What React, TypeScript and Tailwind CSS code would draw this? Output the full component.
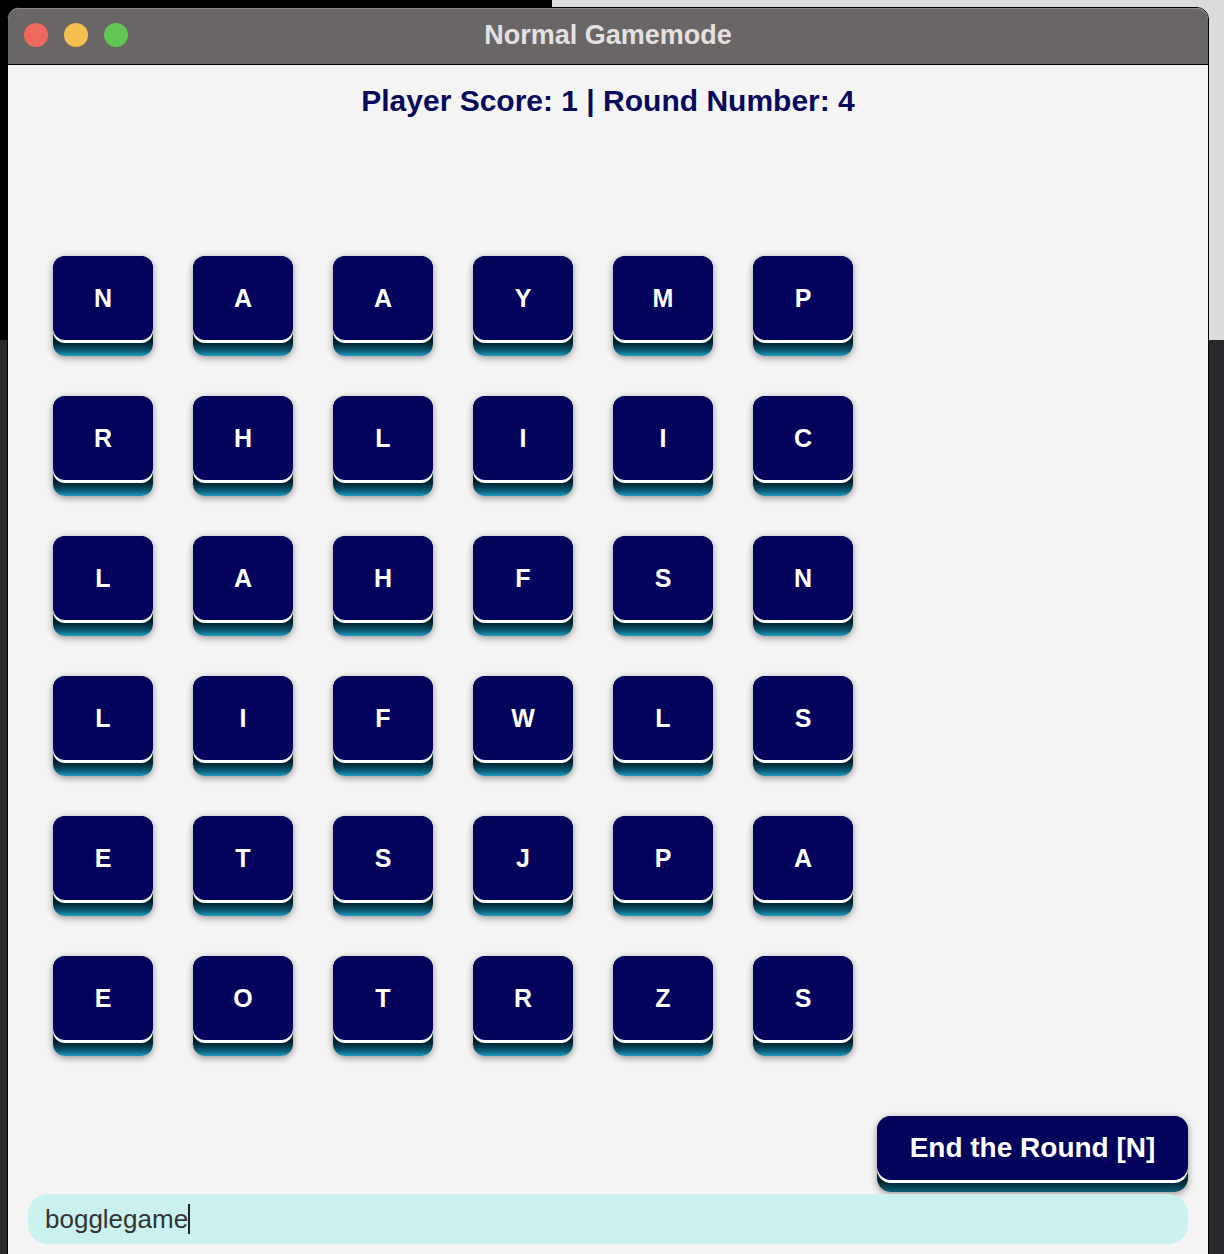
import React from "react";

const rows = [
  ["N", "A", "A", "Y", "M", "P"],
  ["R", "H", "L", "I", "I", "C"],
  ["L", "A", "H", "F", "S", "N"],
  ["L", "I", "F", "W", "L", "S"],
  ["E", "T", "S", "J", "P", "A"],
  ["E", "O", "T", "R", "Z", "S"],
];

function Tile({ letter }: { letter: string }) {
  return (
    <div className="w-[100px] h-[100px] rounded-[12px] bg-[linear-gradient(to_bottom,#01222e_0%,#01222e_86%,#06384a_90%,#0d5f7a_95%,#2299bd_100%)] shadow-[0_2px_7px_rgba(0,0,0,0.4)]">
      <div className="h-[84px] rounded-[12px] bg-[#03035b] shadow-[0_3px_0_#ffffff] flex items-center justify-center text-white font-bold text-[25px] leading-none font-['Liberation_Sans',Arial,sans-serif] pt-[1px]">
        {letter}
      </div>
    </div>
  );
}

export default function App() {
  return (
    <div className="w-[1224px] h-[1254px] overflow-hidden pl-[7px] pt-[7px] bg-[linear-gradient(to_bottom,transparent_340px,#27282c_340px),linear-gradient(to_right,#000000_552px,#dcdcdc_552px)] font-['Liberation_Sans',Arial,sans-serif]">
      <div className="w-[1202px] h-[1260px] rounded-t-[12px] border border-black overflow-hidden bg-[#f4f4f4] flex flex-col">
        {/* Title bar */}
        <div className="h-[57px] shrink-0 bg-[#6a6666] border-b border-black border-t border-t-[#8a8686] rounded-t-[11px] flex items-center px-[16px] pb-[3px]">
          <div className="flex items-center gap-[16px]">
            <div className="w-[24px] h-[24px] rounded-full bg-[#ee6a5e]" />
            <div className="w-[24px] h-[24px] rounded-full bg-[#f5bf4f]" />
            <div className="w-[24px] h-[24px] rounded-full bg-[#61c554]" />
          </div>
          <div className="flex-1 text-center pr-[104px] text-[27px] font-bold text-[#e3e1e1] leading-none">
            Normal Gamemode
          </div>
        </div>

        {/* Content */}
        <div className="flex flex-col px-[20px]">
          <div className="pt-[18px] text-center text-[30px] leading-[36px] font-bold text-[#0a0a5c]">
            Player Score: 1 | Round Number: 4
          </div>

          <div className="mt-[137px] ml-[25px] grid grid-cols-[repeat(6,100px)] gap-[40px]">
            {rows.flat().map((l, i) => (
              <Tile key={i} letter={l} />
            ))}
          </div>

          <div className="mt-[60px] flex justify-end">
            <div className="w-[311px] h-[76px] rounded-[14px] bg-[linear-gradient(to_bottom,#01222e_0%,#01222e_85%,#063a4c_92%,#0f5e78_100%)] shadow-[0_2px_7px_rgba(0,0,0,0.4)]">
              <div className="h-[64px] rounded-[14px] bg-[#03035b] shadow-[0_3px_0_#ffffff] flex items-center justify-center text-white font-bold text-[28px] leading-none">
                End the Round [N]
              </div>
            </div>
          </div>

          <div className="mt-[2px] h-[50px] rounded-[20px] bg-[#c9f2ee] flex items-center pl-[17px] text-[26px] text-[#333333] font-['Liberation_Sans',Arial,sans-serif]">
            <span>bogglegame</span>
            <span className="inline-block w-[2px] h-[30px] bg-[#222222]" />
          </div>
        </div>
      </div>
    </div>
  );
}
